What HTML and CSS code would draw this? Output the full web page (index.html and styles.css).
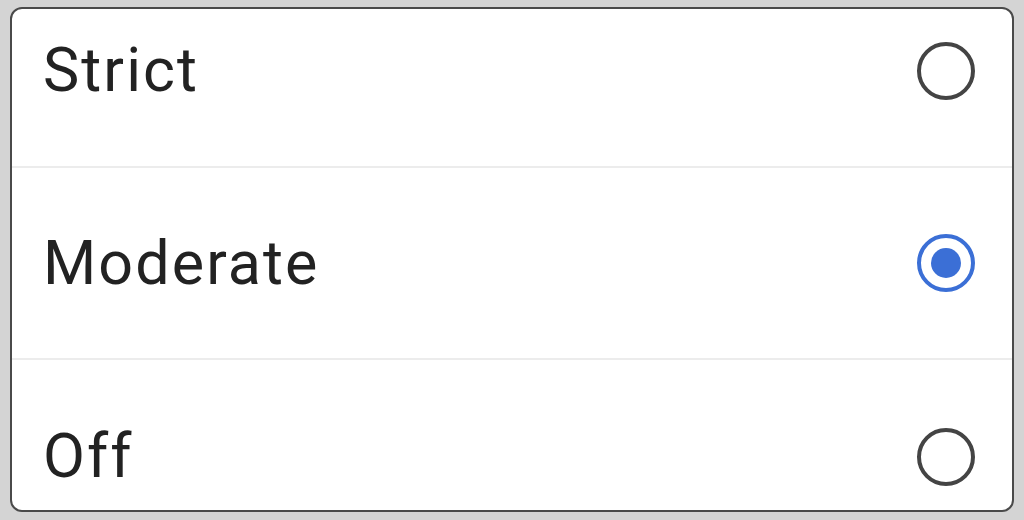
FILE: index.html
```html
<!DOCTYPE html>
<html>
<head>
<meta charset="utf-8">
<link rel="stylesheet" href="styles.css">
</head>
<body>
<div class="card">
  <div class="row row-first">
    <span class="label">Strict</span>
    <span class="radio"></span>
  </div>
  <div class="divider"></div>
  <div class="row row-mid">
    <span class="label">Moderate</span>
    <span class="radio checked"></span>
  </div>
  <div class="divider"></div>
  <div class="row row-last">
    <span class="label">Off</span>
    <span class="radio"></span>
  </div>
</div>
</body>
</html>
```

FILE: styles.css
```css
html, body {
  margin: 0;
  padding: 0;
  background: #d4d4d4;
  width: 1024px;
  height: 520px;
  overflow: hidden;
}
body {
  padding: 7px 10px 0 10px;
  box-sizing: border-box;
  font-family: Roboto, "Noto Sans", sans-serif;
}
.card {
  width: 1004px;
  height: 505px;
  box-sizing: border-box;
  background: #fff;
  border: 2px solid #4a4a4a;
  border-radius: 12px;
  overflow: hidden;
  display: flex;
  flex-direction: column;
}
.row {
  display: flex;
  align-items: center;
  justify-content: space-between;
  padding-left: 31px;
  padding-right: 37px;
  box-sizing: border-box;
  flex: none;
}
.row-first {
  height: 157px;
  padding-bottom: 35px;
}
.row-mid {
  height: 190px;
}
.row-last {
  flex: 1;
  padding-top: 43px;
}
.label {
  font-size: 61px;
  letter-spacing: 2.1px;
  color: #222;
  line-height: 1;
}
.divider {
  height: 2px;
  background: #ececec;
  flex: none;
}
.radio {
  width: 58px;
  height: 58px;
  box-sizing: border-box;
  border: 4px solid #444;
  border-radius: 50%;
  display: flex;
  align-items: center;
  justify-content: center;
}
.row-first .radio {
  margin-top: 2px;
}
.radio.checked {
  border-color: #3b6fd6;
}
.radio.checked::after {
  content: "";
  width: 30px;
  height: 30px;
  border-radius: 50%;
  background: #3b6fd6;
}
```
